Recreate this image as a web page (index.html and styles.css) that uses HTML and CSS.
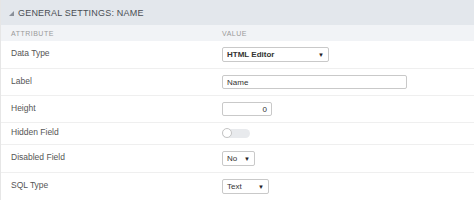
FILE: index.html
```html
<!DOCTYPE html>
<html>
    <head>
        <meta charset="utf-8">
        <title>General Settings</title>

        <link rel="stylesheet" href="styles.css">
    </head>
    <body>

        <div class="panel">
            <div class="panel-title">
                <svg class="panel-arrow" width="5" height="5" viewBox="0 0 5 5"><polygon points="5,0 5,5 0,5" fill="#8a9099"/></svg>
                General Settings: Name
            </div>

            <div class="row row-head">
                <span class="cell-attr">Attribute</span>
                <span class="cell-value">Value</span>
            </div>

            <div class="row">
                <span class="cell-attr">Data Type</span>
                <span class="cell-value">
                    <span class="select select-wide select-bold">HTML Editor<i class="caret">&#9660;</i></span>
                </span>
            </div>

            <div class="row">
                <span class="cell-attr">Label</span>
                <span class="cell-value">
                    <span class="input input-wide">Name</span>
                </span>
            </div>

            <div class="row">
                <span class="cell-attr">Height</span>
                <span class="cell-value">
                    <span class="input input-number">0</span>
                </span>
            </div>

            <div class="row">
                <span class="cell-attr">Hidden Field</span>
                <span class="cell-value">
                    <span class="toggle"><span class="toggle-knob"></span></span>
                </span>
            </div>

            <div class="row">
                <span class="cell-attr">Disabled Field</span>
                <span class="cell-value">
                    <span class="select select-small">No<i class="caret">&#9660;</i></span>
                </span>
            </div>

            <div class="row">
                <span class="cell-attr">SQL Type</span>
                <span class="cell-value">
                    <span class="select select-medium">Text<i class="caret">&#9660;</i></span>
                </span>
            </div>
        </div>

    </body>
</html>
```

FILE: styles.css
```css
/* Page */

body {
    margin: 0;
    background: #fff;
    font-family: "Liberation Sans", Arial, sans-serif;
    color: #555;
}

.panel {
    width: 474px;
    border-left: 1px solid #e6e6e6;
    box-sizing: border-box;
}

/* Title bar */

.panel-title {
    display: flex;
    align-items: center;
    gap: 4px;
    height: 25px;
    padding-left: 8px;
    background: #e3e7ec;
    font-size: 9px;
    letter-spacing: 0.2px;
    text-transform: uppercase;
    color: #4a4e54;
}

.panel-arrow {
    margin-top: 1px;
}

/* Rows */

.row {
    display: grid;
    grid-template-columns: 221px 1fr;
    align-items: center;
    padding: 6px 0;
    border-bottom: 1px solid #efefef;
    font-size: 8.5px;
}

.row-head {
    height: 16px;
    padding: 0;
    box-sizing: border-box;
    background: #f1f3f6;
    border-bottom: none;
    font-size: 7px;
    letter-spacing: 0.5px;
    text-transform: uppercase;
    color: #9a9a9a;
}

.cell-attr {
    padding-left: 10px;
    margin-top: -3px;
}

.row-head .cell-attr {
    margin-top: 0;
}

/* Controls */

.select,
.input {
    display: flex;
    align-items: center;
    box-sizing: border-box;
    border: 1px solid #c9c9c9;
    border-radius: 2px;
    background: #fff;
    color: #333;
    padding: 0 4px;
    font-size: 8px;
}

.select {
    justify-content: space-between;
    height: 15px;
}

.select-bold {
    font-weight: bold;
}

.select-wide {
    width: 107px;
}

.select-small {
    width: 33px;
}

.select-medium {
    width: 47px;
}

.caret {
    font-style: normal;
    font-size: 6px;
    color: #222;
}

.input {
    height: 14px;
}

.input-wide {
    width: 185px;
}

.input-number {
    width: 50px;
    justify-content: flex-end;
}

.toggle {
    display: block;
    position: relative;
    width: 28px;
    height: 9px;
    border-radius: 5px;
    background: #e8eaed;
}

.toggle-knob {
    position: absolute;
    left: 0;
    top: -1px;
    width: 10px;
    height: 10px;
    box-sizing: border-box;
    border-radius: 50%;
    border: 1px solid #c4c4c4;
    background: #fff;
}
```
